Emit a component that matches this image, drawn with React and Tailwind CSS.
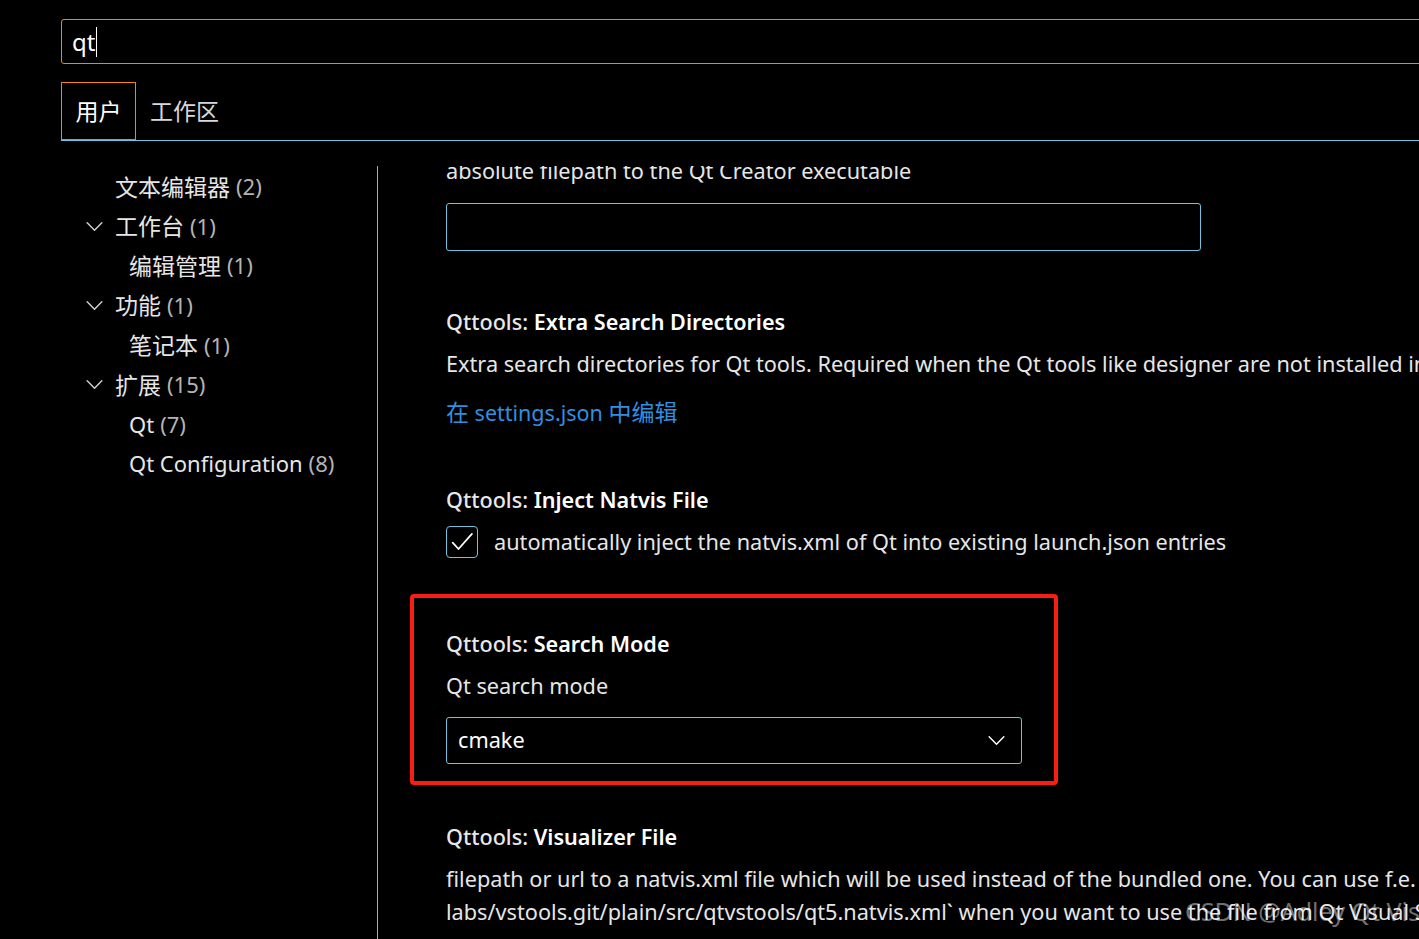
import React from 'react';

const FONT = { fontFamily: '"Noto Sans", "Noto Sans CJK SC", sans-serif' };

function Chevron({ className = '' }) {
  return (
    <svg className={className} viewBox="0 0 20 12" fill="none" stroke="currentColor" strokeWidth={1.6} strokeLinecap="round" strokeLinejoin="round">
      <path d="M2 2l8 8 8-8" />
    </svg>
  );
}

const toc = [
  { label: '文本编辑器', count: 2, level: 1, expand: false, cjk: true },
  { label: '工作台', count: 1, level: 1, expand: true, cjk: true },
  { label: '编辑管理', count: 1, level: 2, cjk: true },
  { label: '功能', count: 1, level: 1, expand: true, cjk: true },
  { label: '笔记本', count: 1, level: 2, cjk: true },
  { label: '扩展', count: 15, level: 1, expand: true, cjk: true },
  { label: 'Qt', count: 7, level: 2 },
  { label: 'Qt Configuration', count: 8, level: 2 },
];

function Title({ name }) {
  return (
    <div className="h-[33px] leading-[33px] text-[21.6px] whitespace-nowrap text-white">
      <span className="font-medium text-[#e8e8e8]">Qttools: </span>
      <span className="font-semibold">{name}</span>
    </div>
  );
}

function Desc({ children, className = '' }) {
  return (
    <div className={`h-[33px] leading-[33px] text-[21.7px] whitespace-nowrap text-[#e6e6e6] ${className}`}>{children}</div>
  );
}

export default function App() {
  return (
    <div className="relative w-[1419px] h-[939px] overflow-hidden bg-black pl-[61px] pt-[19px]" style={FONT}>
      {/* search */}
      <div className="w-[1400px] h-[45px] border border-[#f38518] rounded-[3px] flex items-center pl-[10px]">
        <span className="text-[24px] text-white leading-none">qt</span>
        <span className="ml-[1px] w-px h-[30px] bg-white" />
      </div>

      {/* tabs */}
      <div className="mt-[18px] w-[1400px] flex items-end border-b border-[#6fc3df]">
        <div className="h-[58px] w-[75px] border border-[#f38518] flex items-center justify-center text-[23px] text-white">用户</div>
        <div className="h-[58px] pl-[14px] flex items-center text-[23px] text-[#d8d8d8]">工作区</div>
      </div>

      <div className="flex">
        {/* toc */}
        <div className="w-[317px] shrink-0">
          <div className="mt-[25px] h-[800px] border-r border-[#6fc3df] pt-[1px]">
            {toc.map((t) => (
              <div key={t.label} className="h-[39.6px] flex items-center text-[22px] whitespace-nowrap">
                <div className="w-[54px] flex justify-end pr-[11px]">
                  {t.expand && <Chevron className="w-[19px] h-[11px] text-[#d0d0d0]" />}
                </div>
                <span className={`${t.level === 2 ? 'ml-[14px]' : ''} ${t.cjk ? 'text-[23px]' : ''} text-[#e6e6e6]`}>{t.label}</span>
                <span className="ml-[6px] text-[#b4b4b4]">({t.count})</span>
              </div>
            ))}
          </div>
        </div>

        {/* settings */}
        <div className="mt-[25px] h-[774px] overflow-hidden pl-[68px] flex-1">
          <div className="-mt-[12px]">
            <Desc>absolute filepath to the Qt Creator executable</Desc>
            <div className="mt-[15.5px] w-[755px] h-[48px] border border-[#6fc3df] rounded-[3px]" />

            <div className="mt-[54.5px]"><Title name="Extra Search Directories" /></div>
            <Desc className="mt-[9px]">Extra search directories for Qt tools. Required when the Qt tools like designer are not installed in the Qt directory</Desc>
            <div className="mt-[16px] h-[33px] leading-[33px] text-[21.5px] text-[#2f8fe0] whitespace-nowrap">
              <span className="text-[23px]">在</span> settings.json <span className="text-[23px]">中编辑</span>
            </div>

            <div className="mt-[54px]"><Title name="Inject Natvis File" /></div>
            <div className="mt-[9px] h-[33px] flex items-center">
              <div className="w-[32px] h-[32px] border border-[#6fc3df] rounded-[4px] flex items-center justify-center">
                <svg viewBox="0 0 24 24" className="w-[28px] h-[28px]" fill="none" stroke="white" strokeWidth={1.5} strokeLinecap="round" strokeLinejoin="round">
                  <path d="M4 12.5l5 5.5L20.5 5" />
                </svg>
              </div>
              <Desc className="ml-[16px]">automatically inject the natvis.xml of Qt into existing launch.json entries</Desc>
            </div>

            <div className="mt-[36px] -ml-[36px] w-[648px] border-4 border-[#fa1e12] rounded-[4px] pl-[32px] pt-[28.5px] pb-[17px]">
              <Title name="Search Mode" />
              <Desc className="mt-[9px]">Qt search mode</Desc>
              <div className="mt-[15.5px] w-[576px] h-[47px] border border-[#6fc3df] rounded-[3px] flex items-center justify-between pl-[11px] pr-[15px]">
                <span className="text-[21.7px] text-white">cmake</span>
                <Chevron className="w-[19px] h-[11px] text-white" />
              </div>
            </div>

            <div className="mt-[35px]"><Title name="Visualizer File" /></div>
            <Desc className="mt-[9px]">filepath or url to a natvis.xml file which will be used instead of the bundled one. You can use f.e. `https://code.qt.io/cgit/qt-</Desc>
            <Desc>labs/vstools.git/plain/src/qtvstools/qt5.natvis.xml` when you want to use the file from Qt Visual Studio Tools</Desc>
          </div>
        </div>
      </div>

      {/* watermark */}
      <div className="absolute left-[1185px] top-[893px] text-[25px] text-white/45 whitespace-nowrap pointer-events-none">CSDN @Adley Qt Visual</div>
    </div>
  );
}
